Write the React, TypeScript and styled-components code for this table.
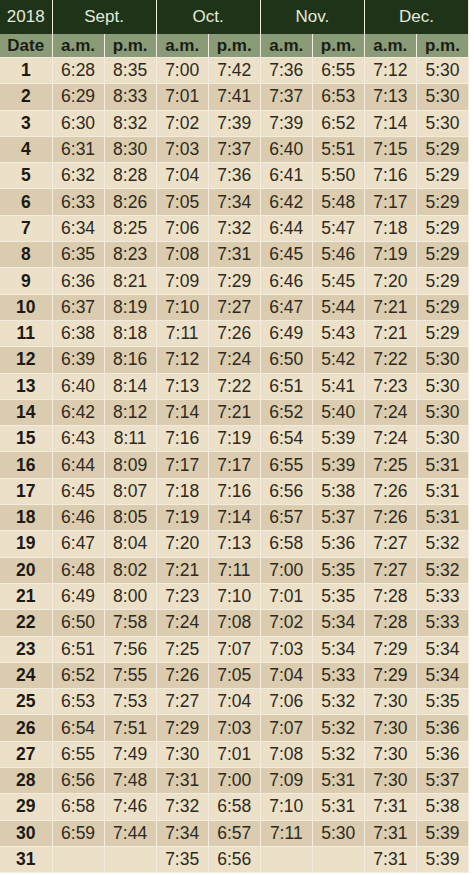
import styled, { createGlobalStyle } from 'styled-components';

// Sunrise / sunset times, one string per column, '-' = no such day
const columns = [
  '6:28 6:29 6:30 6:31 6:32 6:33 6:34 6:35 6:36 6:37 6:38 6:39 6:40 6:42 6:43 6:44 6:45 6:46 6:47 6:48 6:49 6:50 6:51 6:52 6:53 6:54 6:55 6:56 6:58 6:59 -',
  '8:35 8:33 8:32 8:30 8:28 8:26 8:25 8:23 8:21 8:19 8:18 8:16 8:14 8:12 8:11 8:09 8:07 8:05 8:04 8:02 8:00 7:58 7:56 7:55 7:53 7:51 7:49 7:48 7:46 7:44 -',
  '7:00 7:01 7:02 7:03 7:04 7:05 7:06 7:08 7:09 7:10 7:11 7:12 7:13 7:14 7:16 7:17 7:18 7:19 7:20 7:21 7:23 7:24 7:25 7:26 7:27 7:29 7:30 7:31 7:32 7:34 7:35',
  '7:42 7:41 7:39 7:37 7:36 7:34 7:32 7:31 7:29 7:27 7:26 7:24 7:22 7:21 7:19 7:17 7:16 7:14 7:13 7:11 7:10 7:08 7:07 7:05 7:04 7:03 7:01 7:00 6:58 6:57 6:56',
  '7:36 7:37 7:39 6:40 6:41 6:42 6:44 6:45 6:46 6:47 6:49 6:50 6:51 6:52 6:54 6:55 6:56 6:57 6:58 7:00 7:01 7:02 7:03 7:04 7:06 7:07 7:08 7:09 7:10 7:11 -',
  '6:55 6:53 6:52 5:51 5:50 5:48 5:47 5:46 5:45 5:44 5:43 5:42 5:41 5:40 5:39 5:39 5:38 5:37 5:36 5:35 5:35 5:34 5:34 5:33 5:32 5:32 5:32 5:31 5:31 5:30 -',
  '7:12 7:13 7:14 7:15 7:16 7:17 7:18 7:19 7:20 7:21 7:21 7:22 7:23 7:24 7:24 7:25 7:26 7:26 7:27 7:27 7:28 7:28 7:29 7:29 7:30 7:30 7:30 7:30 7:31 7:31 7:31',
  '5:30 5:30 5:30 5:29 5:29 5:29 5:29 5:29 5:29 5:29 5:29 5:30 5:30 5:30 5:30 5:31 5:31 5:31 5:32 5:32 5:33 5:33 5:34 5:34 5:35 5:36 5:36 5:37 5:38 5:39 5:39'
].map((c) => c.split(' ').map((v) => (v === '-' ? '' : v)));

const months = ['Sept.', 'Oct.', 'Nov.', 'Dec.'];

const GlobalStyle = createGlobalStyle`
  body {
    margin: 0;
    background: #ffffff;
    font-family: "Liberation Sans", Arial, sans-serif;
  }
`;

const Table = styled.table`
  width: 469px;
  table-layout: fixed;
  border-collapse: collapse;
  font-family: "Liberation Sans", Arial, sans-serif;
`;

const SEP = '1.5px solid #f2ece0';

const HeadCell = styled.th`
  height: 34px;
  padding: 0;
  background: #1f3319;
  color: #e4eadb;
  font-size: 17px;
  font-weight: 400;
  text-align: center;
  border-left: ${SEP};
  border-right: ${SEP};

  &:first-child {
    border-left: none;
  }
`;

const SubCell = styled.th`
  height: 23px;
  padding: 0;
  background: #8a9b78;
  color: #1b1e15;
  font-size: 17px;
  font-weight: 700;
  text-align: center;
  border-left: ${SEP};
  border-right: ${SEP};

  &:first-child {
    border-left: none;
  }
`;

const Row = styled.tr<{ $alt: boolean }>`
  background: ${(p) => (p.$alt ? '#dbccaf' : '#ece0c8')};
`;

const Cell = styled.td<{ $bold?: boolean }>`
  height: 25.3px;
  padding: 0;
  text-align: center;
  font-size: 17.5px;
  font-weight: ${(p) => (p.$bold ? 700 : 400)};
  color: ${(p) => (p.$bold ? '#1c1a14' : '#2e2a22')};
  border: ${SEP};

  &:first-child {
    border-left: none;
  }
`;

export default function App() {
  const days = Array.from({ length: 31 }, (_, i) => i + 1);

  return (
    <>
      <GlobalStyle />
      <Table>
        <thead>
          <tr>
            <HeadCell>2018</HeadCell>
            {months.map((m) => (
              <HeadCell key={m} colSpan={2}>
                {m}
              </HeadCell>
            ))}
          </tr>
          <tr>
            <SubCell>Date</SubCell>
            {months.map((m) => [
              <SubCell key={m + 'am'}>a.m.</SubCell>,
              <SubCell key={m + 'pm'}>p.m.</SubCell>
            ])}
          </tr>
        </thead>
        <tbody>
          {days.map((d, i) => (
            <Row key={d} $alt={i % 2 === 1}>
              <Cell $bold>{d}</Cell>
              {columns.map((col, j) => (
                <Cell key={j}>{col[i]}</Cell>
              ))}
            </Row>
          ))}
        </tbody>
      </Table>
    </>
  );
}
